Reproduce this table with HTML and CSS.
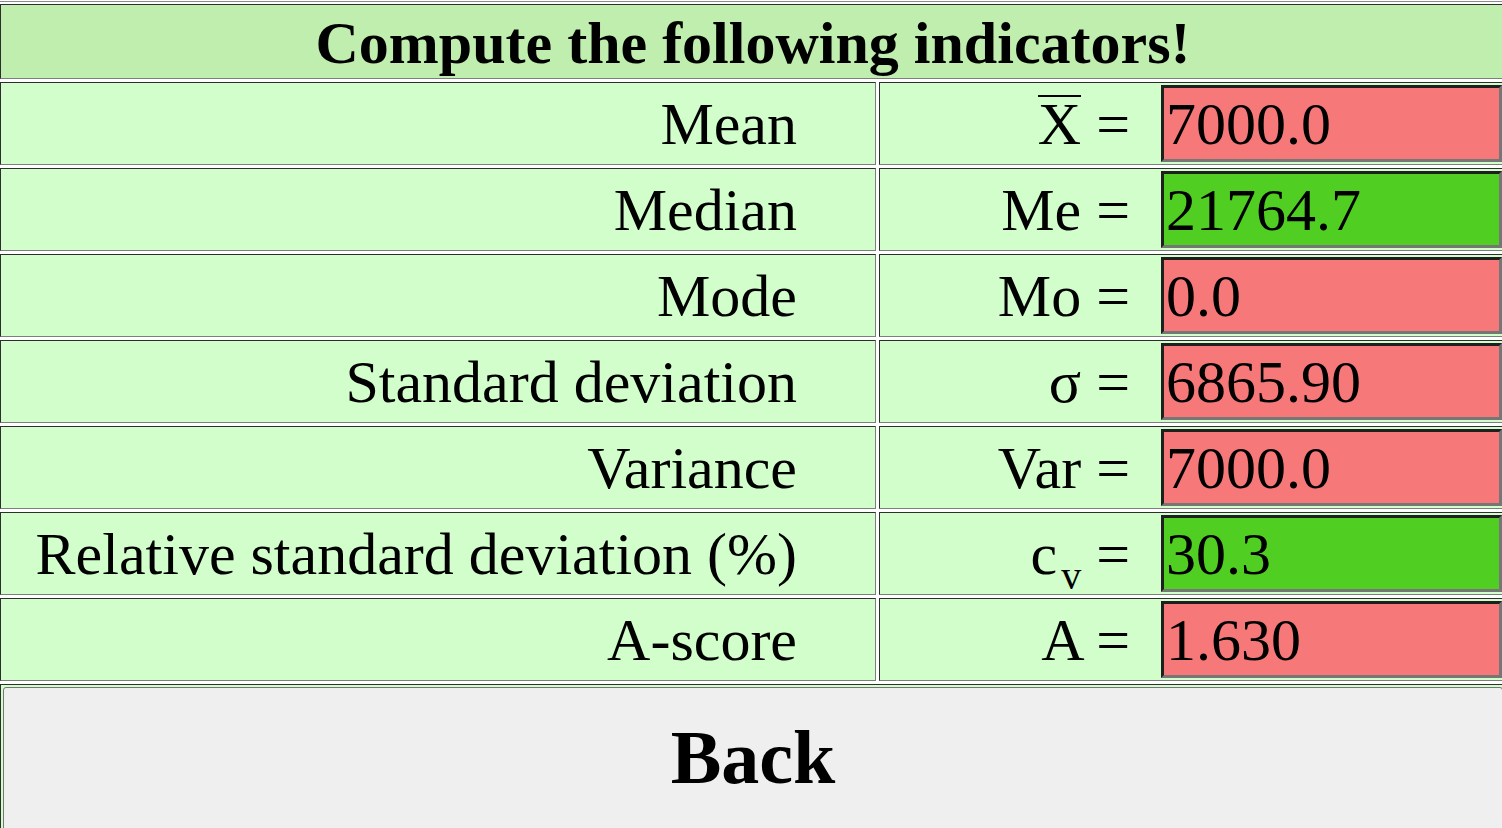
FILE: index.html
```html
<!DOCTYPE html>
<html lang="en">
<head>
<meta charset="utf-8">
<title>Compute the following indicators!</title>
<link rel="stylesheet" href="styles.css">
</head>
<body>
<div class="sheet">
  <div class="cell head">Compute the following indicators!</div>
  <div class="grid">
    <div class="cell name">Mean</div>
    <div class="cell calc"><div class="sym"><span><span class="xbar">X</span> =</span></div><div class="val bad">7000.0</div></div>

    <div class="cell name">Median</div>
    <div class="cell calc"><div class="sym"><span>Me =</span></div><div class="val good">21764.7</div></div>

    <div class="cell name">Mode</div>
    <div class="cell calc"><div class="sym"><span>Mo =</span></div><div class="val bad">0.0</div></div>

    <div class="cell name">Standard deviation</div>
    <div class="cell calc"><div class="sym"><span>σ =</span></div><div class="val bad">6865.90</div></div>

    <div class="cell name">Variance</div>
    <div class="cell calc"><div class="sym"><span>Var =</span></div><div class="val bad">7000.0</div></div>

    <div class="cell name">Relative standard deviation (%)</div>
    <div class="cell calc"><div class="sym"><span>c<sub class="sub">v</sub> =</span></div><div class="val good">30.3</div></div>

    <div class="cell name">A-score</div>
    <div class="cell calc"><div class="sym"><span>A =</span></div><div class="val bad">1.630</div></div>
  </div>
  <div class="cell foot"><button class="back" type="button">Back</button></div>
</div>
</body>
</html>
```
FILE: styles.css
```css
html, body {
  margin: 0;
  padding: 0;
  background: #ffffff;
  overflow: hidden;
}
body {
  font-family: "Liberation Serif", "Times New Roman", serif;
  color: #000;
}
.sheet {
  width: 1506px;
  border-top: 1px solid #8a8a8a;
  margin-top: 1px;
  padding-top: 2px;
  display: flex;
  flex-direction: column;
  gap: 3px;
  background: #ffffff;
}
.cell {
  box-sizing: border-box;
  border-top: 1px solid #2e2e2e;
  border-left: 1px solid #2e2e2e;
  border-bottom: 1px solid #7e7e7e;
  border-right: 1px solid #7e7e7e;
  background: #d1fecb;
}
.head {
  height: 75px;
  background: #bfeeae;
  text-align: center;
  font-weight: bold;
  font-size: 60px;
  line-height: 66px;
  padding-top: 5px;
}
.grid {
  display: grid;
  grid-template-columns: 876px 1fr;
  column-gap: 3px;
  row-gap: 3px;
}
.name {
  height: 83px;
  display: flex;
  align-items: center;
  justify-content: flex-end;
  padding-right: 78px;
  font-size: 60px;
  padding-top: 2px;
}
.calc {
  height: 83px;
  display: flex;
  align-items: stretch;
  padding: 2px 3px 2px 0;
}
.sym {
  flex: 1;
  display: flex;
  align-items: center;
  justify-content: flex-end;
  padding-right: 31px;
  font-size: 60px;
  white-space: pre;
  padding-top: 2px;
}
.xbar {
  display: inline-block;
  border-top: 2px solid #000;
  line-height: 44px;
  padding-top: 5px;
  margin-top: -8px;
}
.sub {
  font-size: 40px;
  vertical-align: -15px;
  line-height: 0;
  margin-left: 4px;
}
.val {
  box-sizing: border-box;
  width: 341px;
  border-top: 3px solid #1f1f1f;
  border-left: 3px solid #1f1f1f;
  border-bottom: 3px solid #767676;
  border-right: 3px solid #767676;
  padding-left: 2px;
  font-size: 60px;
  display: flex;
  align-items: center;
  padding-top: 2px;
}
.bad {
  background: #f77878;
}
.good {
  background: #50ce22;
}
.foot {
  height: 200px;
  padding: 2px;
}
.back {
  width: 100%;
  height: 100%;
  box-sizing: border-box;
  background: #efefef;
  border: 1px solid #767676;
  border-radius: 3px;
  font-family: "Liberation Serif", "Times New Roman", serif;
  font-weight: bold;
  font-size: 76px;
  color: #000;
  padding: 26px 0 0 0;
  line-height: 87px;
  display: flex;
  justify-content: center;
  align-items: flex-start;
}
```
